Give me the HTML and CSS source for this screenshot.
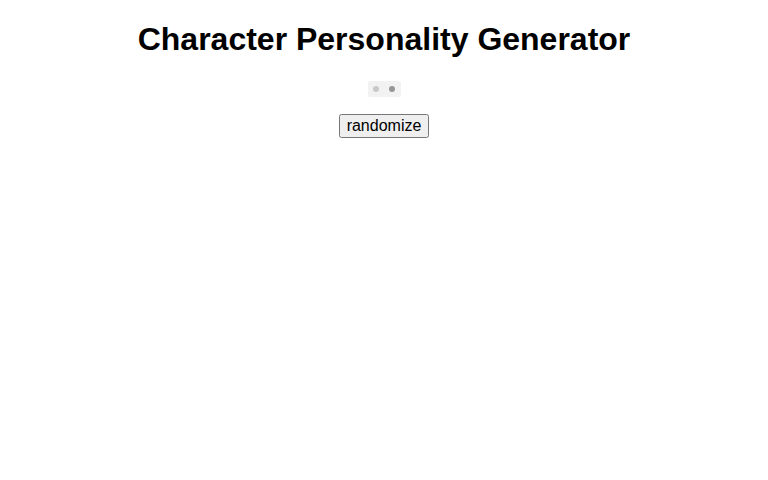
FILE: index.html
```html
<!DOCTYPE html>
<html>
<head>
<meta charset="utf-8">
<link rel="stylesheet" href="styles.css">
</head>
<body>
<main class="app">
  <h1 class="title">Character Personality Generator</h1>
  <div class="dots">
    <span class="dot dot-light"></span>
    <span class="dot dot-dark"></span>
  </div>
  <button class="btn">randomize</button>
</main>
</body>
</html>
```
FILE: styles.css
```css
html, body {
  margin: 0;
  padding: 0;
  background: #fff;
}
.app {
  display: flex;
  flex-direction: column;
  align-items: center;
  font-family: "Liberation Sans", Arial, sans-serif;
  color: #000;
}
.title {
  font-size: 32px;
  font-weight: bold;
  margin: 21px 0 0 0;
  line-height: 37px;
}
.dots {
  margin-top: 23px;
  width: 33px;
  height: 16px;
  box-sizing: border-box;
  padding: 0 5px;
  background: #f2f2f2;
  border-radius: 2px;
  display: flex;
  align-items: center;
  gap: 10px;
}
.dot {
  width: 6px;
  height: 6px;
  border-radius: 50%;
}
.dot-light { background: #c8c8c8; }
.dot-dark { background: #969696; }
.btn {
  margin-top: 17px;
  font-family: "Liberation Sans", Arial, sans-serif;
  font-size: 16px;
}
```
